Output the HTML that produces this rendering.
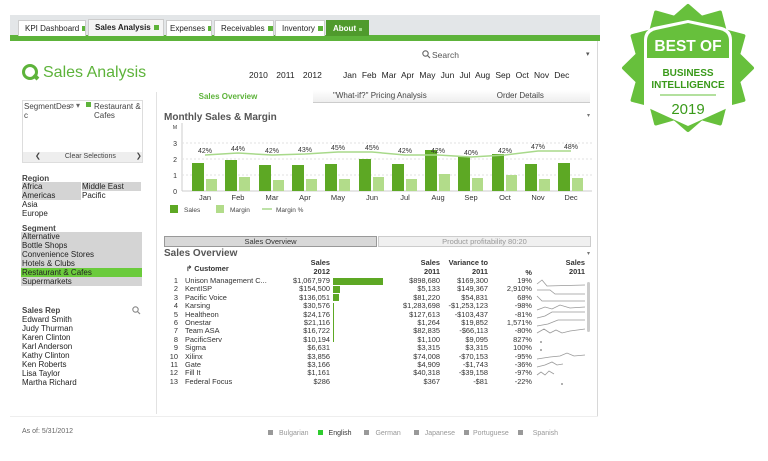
<!DOCTYPE html>
<html><head><meta charset="utf-8"><style>
*{margin:0;padding:0;box-sizing:border-box}
body{width:768px;height:461px;background:#fff;font-family:"Liberation Sans",Arial,sans-serif;color:#222;position:relative;overflow:hidden}
.a{position:absolute;white-space:nowrap}
.tab{position:absolute;top:20px;height:16px;background:#fff;border:1px solid #ccc;border-bottom:none;font-size:8px;line-height:15px;padding-left:6px;white-space:nowrap;overflow:hidden}
.sq{display:inline-block;width:5px;height:5px;background:#5db33a;margin-left:3px;vertical-align:0}
.lb{font-size:8px;line-height:9px}
.t{font-size:7.4px;color:#333}
.r{text-align:right}
</style></head><body>
<div class="a" style="left:10px;top:15px;width:590px;height:22px;background:#e3e6e8"></div>
<div class="a" style="left:10px;top:35px;width:590px;height:6px;background:#5db33a"></div>
<div class="tab" style="left:18px;width:68px">KPI Dashboard<span class="sq"></span></div>
<div class="tab" style="left:88px;width:76px;top:19px;height:17px;background:#f5f5f5;font-weight:bold">Sales Analysis<span class="sq"></span></div>
<div class="tab" style="left:166px;width:46px;padding-left:3px">Expenses<span class="sq"></span></div>
<div class="tab" style="left:214px;width:60px">Receivables<span class="sq"></span></div>
<div class="tab" style="left:275px;width:50px">Inventory<span class="sq"></span></div>
<div class="tab" style="left:326px;width:43px;background:#4f9a2c;border-color:#4f9a2c;color:#fff;font-weight:bold">About<span class="sq" style="background:#9fd98a;width:3px;height:3px"></span></div>
<div class="a" style="left:597px;top:41px;width:1px;height:375px;background:#d8d8d8"></div>
<div class="a" style="left:22px;top:64px;width:16px;height:16px;border:3.5px solid #5db33a;border-radius:50%"></div>
<div class="a" style="left:33px;top:75px;width:6px;height:3.5px;background:#5db33a;transform:rotate(45deg)"></div>
<div class="a" style="left:43px;top:64px;font-size:16px;color:#5db33a">Sales Analysis</div>
<svg class="a" style="left:422px;top:50px" width="9" height="9"><circle cx="3.5" cy="3.5" r="2.7" fill="none" stroke="#666" stroke-width="1.1"/><line x1="5.5" y1="5.5" x2="8" y2="8" stroke="#666" stroke-width="1.2"/></svg>
<div class="a" style="left:432px;top:50px;font-size:8.5px;color:#555">Search</div>
<div class="a" style="left:586px;top:50px;font-size:7px;color:#555">▾</div>
<div class="a" style="left:249px;top:70px;font-size:8.5px;word-spacing:6px">2010 2011 2012</div>
<div class="a" style="left:343px;top:70px;font-size:8.5px;word-spacing:2.8px">Jan Feb Mar Apr May Jun Jul Aug Sep Oct Nov Dec</div>
<div class="a" style="left:163px;top:90px;width:130px;height:13px;font-size:8px;font-weight:bold;color:#5db33a;text-align:center;line-height:13px">Sales Overview</div>
<div class="a" style="left:313px;top:90px;width:277px;height:13px;background:linear-gradient(#fff,#eee);border-bottom:1px solid #ccc;font-size:8px;color:#444;line-height:12px"><span style="margin-left:20px">"What-if?" Pricing Analysis</span><span style="margin-left:70px">Order Details</span></div>
<div class="a" style="left:156px;top:92px;width:1px;height:322px;background:#e2e2e2"></div>
<div class="a" style="left:22px;top:100px;width:121px;height:63px;border:1px solid #ddd"></div>
<div class="a lb" style="left:24px;top:102px;color:#444">SegmentDes<br>c</div>
<div class="a" style="left:69px;top:101px;font-size:8px;color:#666">⌀ ▾</div>
<div class="a" style="left:86px;top:102px;width:5px;height:5px;background:#5db33a"></div>
<div class="a lb" style="left:94px;top:102px;color:#444">Restaurant &amp;<br>Cafes</div>
<div class="a" style="left:23px;top:152px;width:119px;height:10px;background:#eee;font-size:7px;color:#444;line-height:10px"><span style="margin-left:12px">❮</span><span style="margin-left:24px">Clear Selections</span><span style="margin-left:20px">❯</span></div>
<div class="a" style="left:22px;top:174px;font-size:8px;font-weight:bold;color:#444">Region</div>
<div class="a" style="left:22px;top:182px;width:59px;height:18px;background:#d4d4d4"></div>
<div class="a" style="left:82px;top:182px;width:59px;height:9px;background:#d4d4d4"></div>
<div class="a lb" style="left:22px;top:182px">Africa<br>Americas<br>Asia<br>Europe</div>
<div class="a lb" style="left:82px;top:182px">Middle East<br>Pacific</div>
<div class="a" style="left:22px;top:224px;font-size:8px;font-weight:bold;color:#444">Segment</div>
<div class="a" style="left:21px;top:232px;width:121px;height:54px;background:#d4d4d4"></div>
<div class="a" style="left:21px;top:268px;width:121px;height:9px;background:#6bcb3c"></div>
<div class="a lb" style="left:22px;top:232px">Alternative<br>Bottle Shops<br>Convenience Stores<br>Hotels &amp; Clubs<br>Restaurant &amp; Cafes<br>Supermarkets</div>
<div class="a" style="left:22px;top:306px;font-size:8px;font-weight:bold;color:#444">Sales Rep</div>
<svg class="a" style="left:132px;top:306px" width="9" height="9"><circle cx="3.5" cy="3.5" r="2.7" fill="none" stroke="#888" stroke-width="1.1"/><line x1="5.5" y1="5.5" x2="8" y2="8" stroke="#888" stroke-width="1.2"/></svg>
<div class="a lb" style="left:22px;top:315px">Edward Smith<br>Judy Thurman<br>Karen Clinton<br>Karl Anderson<br>Kathy Clinton<br>Ken Roberts<br>Lisa Taylor<br>Martha Richard</div>
<div class="a" style="left:164px;top:112px;font-size:10px;font-weight:bold;color:#555">Monthly Sales &amp; Margin</div>
<div class="a" style="left:587px;top:112px;font-size:6px;color:#777">▾</div>
<svg class="a" style="left:0;top:0" width="768" height="461" font-family="Liberation Sans,sans-serif">
<g font-size="7" fill="#333" text-anchor="end">
<text x="177" y="129" font-size="5">M</text>
<text x="177" y="146">3</text><text x="177" y="162">2</text><text x="177" y="178">1</text><text x="177" y="194">0</text></g>
<line x1="182" y1="123" x2="182" y2="191" stroke="#ccc"/>
<line x1="182" y1="191" x2="592" y2="191" stroke="#ccc"/>
<g stroke="#e2e2e2" stroke-dasharray="2,2"><line x1="182" y1="143" x2="592" y2="143"/><line x1="182" y1="159" x2="592" y2="159"/><line x1="182" y1="175" x2="592" y2="175"/></g>
<g fill="#5da824">
<rect x="192" y="163" width="12" height="28"/><rect x="225" y="160" width="12" height="31"/><rect x="259" y="165" width="12" height="26"/><rect x="292" y="165" width="12" height="26"/><rect x="325" y="164" width="12" height="27"/><rect x="359" y="159" width="12" height="32"/><rect x="392" y="164" width="12" height="27"/><rect x="425" y="150" width="12" height="41"/><rect x="458" y="157" width="12" height="34"/><rect x="492" y="154" width="12" height="37"/><rect x="525" y="164" width="12" height="27"/><rect x="558" y="163" width="12" height="28"/></g>
<g fill="#b2dc8a">
<rect x="206" y="179" width="11" height="12"/><rect x="239" y="177" width="11" height="14"/><rect x="273" y="180" width="11" height="11"/><rect x="306" y="179" width="11" height="12"/><rect x="339" y="179" width="11" height="12"/><rect x="373" y="177" width="11" height="14"/><rect x="406" y="179" width="11" height="12"/><rect x="439" y="174" width="11" height="17"/><rect x="472" y="178" width="11" height="13"/><rect x="506" y="175" width="11" height="16"/><rect x="539" y="179" width="11" height="12"/><rect x="572" y="178" width="11" height="13"/></g>
<polyline fill="none" stroke="#a8d98a" stroke-width="1.5" points="205,155 238,153 272,155 305,154 338,152 372,152 405,155 438,155 471,157 505,155 538,151 571,151"/>
<g font-size="7" fill="#333" text-anchor="middle">
<text x="205" y="153">42%</text><text x="238" y="151">44%</text><text x="272" y="153">42%</text><text x="305" y="152">43%</text><text x="338" y="150">45%</text><text x="372" y="150">45%</text><text x="405" y="153">42%</text><text x="438" y="153">42%</text><text x="471" y="155">40%</text><text x="505" y="153">42%</text><text x="538" y="149">47%</text><text x="571" y="149">48%</text>
<g font-size="7.5"><text x="205" y="200">Jan</text><text x="238" y="200">Feb</text><text x="272" y="200">Mar</text><text x="305" y="200">Apr</text><text x="338" y="200">May</text><text x="372" y="200">Jun</text><text x="405" y="200">Jul</text><text x="438" y="200">Aug</text><text x="471" y="200">Sep</text><text x="505" y="200">Oct</text><text x="538" y="200">Nov</text><text x="571" y="200">Dec</text></g></g>
<rect x="170" y="205" width="8" height="8" fill="#5da824"/><text x="184" y="212" font-size="6.5" fill="#444">Sales</text>
<rect x="216" y="205" width="8" height="8" fill="#b2dc8a"/><text x="230" y="212" font-size="6.5" fill="#444">Margin</text>
<line x1="262" y1="209" x2="272" y2="209" stroke="#a8d98a" stroke-width="1.5"/><text x="276" y="212" font-size="6.5" fill="#444">Margin %</text>
<g fill="none" stroke="#999" stroke-width="0.8">
<polyline points="537,284 542,280 547,286 585,285"/>
<polyline points="537,290 550,290 555,294 585,294"/>
<polyline points="537,296 542,301 585,301"/>
<polyline points="537,310 545,307 552,309 560,305 570,308 585,307"/>
<polyline points="537,318 545,316 552,312 585,312"/>
<polyline points="537,326 548,324 558,320 585,320"/>
<polyline points="537,333 544,329 550,333 556,330 562,333 570,331 585,329"/>
<polyline points="537,359 550,357 560,356 567,353 574,356 585,355"/>
<polyline points="537,367 545,365 552,362 557,365 563,364"/>
<polyline points="537,375 541,372 545,375 549,371 554,374"/>
</g>
<g fill="#999"><circle cx="541" cy="342" r="1"/><circle cx="541" cy="350" r="1"/><circle cx="562" cy="384" r="1"/></g>
<polygon fill="#67c03c" stroke="#67c03c" stroke-width="4" stroke-linejoin="round" points="688,6 701.5,17.8 720,12.6 724.8,31.2 743.4,36 738.2,54.5 752,68 738.2,81.5 743.4,100 724.8,104.8 720,123.4 701.5,118.2 688,130 674.5,118.2 656,123.4 651.2,104.8 632.6,100 637.8,81.5 624,68 637.8,54.5 632.6,36 651.2,31.2 656,12.6 674.5,17.8"/>
<path d="M644,40 Q644,30 654,27 L688,20 L722,27 Q732,30 732,40 L732,106 L688,126 L644,106 Z" fill="#fff"/>
<path d="M647,41 Q647,32 656,30 L688,23 L720,30 Q729,32 729,41 L729,58 L647,58 Z" fill="#67c03c"/>
<text x="688" y="51" font-size="15.5" font-weight="bold" fill="#fff" text-anchor="middle">BEST OF</text>
<text x="688" y="76" font-size="10" font-weight="bold" fill="#3a9a1a" text-anchor="middle">BUSINESS</text>
<text x="688" y="88" font-size="10" font-weight="bold" fill="#3a9a1a" text-anchor="middle">INTELLIGENCE</text>
<line x1="660" y1="95" x2="716" y2="95" stroke="#67c03c"/>
<text x="688" y="114" font-size="15" fill="#3a9a1a" text-anchor="middle">2019</text>
</svg>
<div class="a" style="left:164px;top:236px;width:213px;height:11px;background:#d8d8d8;border:1px solid #999;font-size:7.5px;text-align:center;line-height:10px;color:#333">Sales Overview</div>
<div class="a" style="left:378px;top:236px;width:213px;height:11px;background:#f0f0f0;border:1px solid #ccc;font-size:7.5px;text-align:center;line-height:10px;color:#999">Product profitability 80:20</div>
<div class="a" style="left:164px;top:248px;font-size:10px;font-weight:bold;color:#555">Sales Overview</div>
<div class="a" style="left:587px;top:250px;font-size:6px;color:#777">▾</div>
<div class="a t" style="left:186px;top:264px;font-weight:bold">↱ Customer</div>
<div class="a t r" style="left:280px;top:259px;width:50px;font-weight:bold;line-height:8.5px">Sales<br>2012</div>
<div class="a t r" style="left:390px;top:259px;width:50px;font-weight:bold;line-height:8.5px">Sales<br>2011</div>
<div class="a t r" style="left:430px;top:259px;width:58px;font-weight:bold;line-height:8.5px">Variance to<br>2011</div>
<div class="a t r" style="left:500px;top:268px;width:32px;font-weight:bold">%</div>
<div class="a t r" style="left:540px;top:259px;width:45px;font-weight:bold;line-height:8.5px">Sales<br>2011</div>
<div class="a" style="left:333px;top:278px;width:50px;height:7px;background:#5da824"></div>
<div class="a" style="left:333px;top:286px;width:7px;height:7px;background:#5da824"></div>
<div class="a" style="left:333px;top:294px;width:6px;height:7px;background:#5da824"></div>
<div class="a" style="left:333px;top:303px;width:1px;height:39px;background:#5da824"></div>
<div class="a t r" style="left:166px;top:277px;width:12px;line-height:8.4px">1<br>2<br>3<br>4<br>5<br>6<br>7<br>8<br>9<br>10<br>11<br>12<br>13</div>
<div class="a t" style="left:185px;top:277px;line-height:8.4px">Unison Management C...<br>KentISP<br>Pacific Voice<br>Karsing<br>Healtheon<br>Onestar<br>Team ASA<br>PacificServ<br>Sigma<br>Xilinx<br>Gate<br>Fill It<br>Federal Focus</div>
<div class="a t r" style="left:270px;top:277px;width:60px;line-height:8.4px">$1,067,979<br>$154,500<br>$136,051<br>$30,576<br>$24,176<br>$21,116<br>$16,722<br>$10,194<br>$6,631<br>$3,856<br>$3,166<br>$1,161<br>$286</div>
<div class="a t r" style="left:380px;top:277px;width:60px;line-height:8.4px">$898,680<br>$5,133<br>$81,220<br>$1,283,698<br>$127,613<br>$1,264<br>$82,835<br>$1,100<br>$3,315<br>$74,008<br>$4,909<br>$40,318<br>$367</div>
<div class="a t r" style="left:428px;top:277px;width:60px;line-height:8.4px">$169,300<br>$149,367<br>$54,831<br>-$1,253,123<br>-$103,437<br>$19,852<br>-$66,113<br>$9,095<br>$3,315<br>-$70,153<br>-$1,743<br>-$39,158<br>-$81</div>
<div class="a t r" style="left:492px;top:277px;width:40px;line-height:8.4px">19%<br>2,910%<br>68%<br>-98%<br>-81%<br>1,571%<br>-80%<br>827%<br>100%<br>-95%<br>-36%<br>-97%<br>-22%</div>
<div class="a" style="left:587px;top:282px;width:3px;height:50px;background:#ccc;border-radius:2px"></div>
<div class="a" style="left:10px;top:416px;width:588px;height:1px;background:#eee"></div>
<div class="a" style="left:22px;top:428px;font-size:7px;color:#666">As of: 5/31/2012</div>
<div class="a" style="left:268px;top:430px;font-size:7px;color:#999;word-spacing:1px">
<span class="sq" style="background:#999;margin:0 6px 0 0"></span>Bulgarian
<span class="sq" style="background:#2ecc2e;margin:0 6px 0 6px"></span><span style="color:#333">English</span>
<span class="sq" style="background:#999;margin:0 6px 0 10px"></span>German
<span class="sq" style="background:#999;margin:0 6px 0 10px"></span>Japanese
<span class="sq" style="background:#999;margin:0 4px 0 6px"></span>Portuguese
<span class="sq" style="background:#999;margin:0 10px 0 6px"></span>Spanish</div>
</body></html>
